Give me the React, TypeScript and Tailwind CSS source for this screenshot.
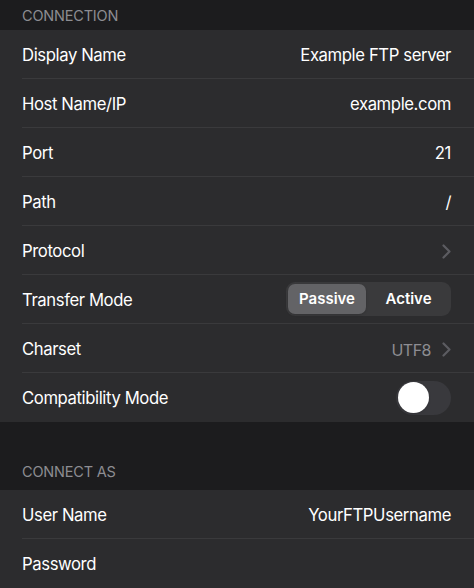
import React from "react";

const font = { fontFamily: "Inter, 'Liberation Sans', sans-serif" };

function Chevron() {
  return (
    <svg width="9" height="15" viewBox="0 0 9 15" className="shrink-0">
      <path d="M1.5 1.5 L7.5 7.5 L1.5 13.5" fill="none" stroke="#5c5c61" strokeWidth="2.2" strokeLinecap="round" strokeLinejoin="round" />
    </svg>
  );
}

function Row({ label, children, last }: { label: string; children?: React.ReactNode; last?: boolean }) {
  return (
    <div className="pl-[22px]">
      <div className={`flex h-[49px] items-center justify-between pr-[23px] pt-[3px] ${last ? "" : "border-b border-[#3a3a3c]"}`}>
        <span className="text-[16.7px] tracking-[-0.4px] text-white">{label}</span>
        {children}
      </div>
    </div>
  );
}

function Value({ children }: { children: React.ReactNode }) {
  return <span className="text-[16.7px] tracking-[-0.4px] text-white">{children}</span>;
}

export default function App() {
  return (
    <div className="min-h-[588px] w-[474px] bg-[#1c1c1e]" style={font}>
      <div className="flex h-[30px] items-center pl-[22px] pt-[1px] text-[14.5px] tracking-[-0.2px] text-[#8d8d92]">CONNECTION</div>
      <div className="bg-[#2c2c2e]">
        <Row label="Display Name"><Value>Example FTP server</Value></Row>
        <Row label="Host Name/IP"><Value>example.com</Value></Row>
        <Row label="Port"><Value>21</Value></Row>
        <Row label="Path"><Value>/</Value></Row>
        <Row label="Protocol"><Chevron /></Row>
        <Row label="Transfer Mode">
          <div className="-mt-[3px] flex h-[34px] w-[165px] items-center rounded-[9px] bg-[#3a3a3c] p-[2px]">
            <div className="flex h-[30px] w-[78px] items-center justify-center rounded-[7px] bg-[#636366] text-[15px] font-semibold text-white shadow">Passive</div>
            <div className="flex h-[30px] flex-1 items-center justify-center pl-[2px] text-[15px] font-semibold text-white">Active</div>
          </div>
        </Row>
        <Row label="Charset">
          <div className="flex items-center gap-[11px]">
            <span className="text-[16px] tracking-[-0.5px] text-[#8d8d92]">UTF8</span>
            <Chevron />
          </div>
        </Row>
        <Row label="Compatibility Mode" last>
          <div className="-mt-[3px] flex h-[34px] w-[55px] items-center rounded-full bg-[#39393d] p-[2px]">
            <div className="h-[31px] w-[31px] rounded-full bg-white shadow" />
          </div>
        </Row>
      </div>
      <div className="flex h-[68px] items-end pb-[7px] pl-[22px] text-[14.5px] tracking-[-0.2px] text-[#8d8d92]">CONNECT AS</div>
      <div className="bg-[#2c2c2e]">
        <Row label="User Name"><Value>YourFTPUsername</Value></Row>
        <Row label="Password" last />
      </div>
    </div>
  );
}
